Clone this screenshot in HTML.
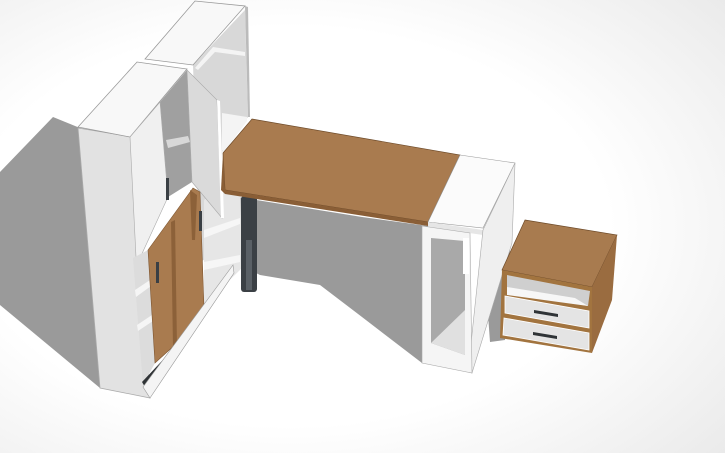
<!DOCTYPE html>
<html><head><meta charset="utf-8"><style>
html,body{margin:0;padding:0;width:725px;height:453px;overflow:hidden;background:#fff}
svg{display:block}
</style></head><body>
<svg width="725" height="453" viewBox="0 0 725 453" xmlns="http://www.w3.org/2000/svg">
<defs>
<radialGradient id="bg" cx="0.4" cy="0.5" r="0.8">
<stop offset="0.55" stop-color="#ffffff"/><stop offset="1" stop-color="#e9e9e9"/>
</radialGradient>
</defs>
<rect width="725" height="453" fill="url(#bg)"/>
<g stroke="none">
<!-- shadows -->
<polygon points="0,172 53,117 80,128 100,388 0,305" fill="#9a9a9a"/>
<polygon points="225,195 362,217 428,226 422,363 362,317 320,285 260,275 240,265" fill="#9a9a9a"/>
<polygon points="482,232 510,250 505,340 490,342" fill="#9a9a9a"/>
<!-- rear shelving interior -->
<polygon points="193,65 245,10 248,117 222,152 222,250 200,262" fill="#d8d8d8"/>
<polygon points="195,68 213,47 245,52 245,56 215,52 198,70" fill="#f4f4f4"/>
<polygon points="222,113 247,117 247,121 224,152 222,150" fill="#f4f4f4"/>
<!-- lower right compartment -->
<polygon points="204,200 240,170 242,268 204,305" fill="#e6e6e6"/>
<polygon points="204,230 240,218 240,224 204,238" fill="#f6f6f6"/>
<polygon points="204,262 240,255 240,262 204,270" fill="#f6f6f6"/>
<!-- left side face -->
<polygon points="78,128 133,137 150,398 100,388" fill="#e2e2e2" stroke="#aaa" stroke-width="0.8"/>
<!-- tops -->
<polygon points="145,59 195,1 245,6 193,65" fill="#f8f8f8" stroke="#999" stroke-width="0.8"/>
<polygon points="78,127 137,62 187,69 130,137" fill="#f8f8f8" stroke="#999" stroke-width="0.8"/>
<polygon points="245,6 248,7 250,117 248,117" fill="#bbb"/>
<!-- inner area between doors -->
<polygon points="160,102 187,70 192,182 168,197" fill="#a0a0a0"/>
<polygon points="166,140 188,136 190,142 168,148" fill="#d8d8d8"/>
<!-- open door -->
<polygon points="187,70 217,100 222,218 192,182" fill="#dadada" stroke="#aaa" stroke-width="0.6"/>
<polygon points="217,100 220,101 224,218 221,218" fill="#fff"/>
<!-- closed upper door -->
<polygon points="130,137 160,102 168,197 140,258 136,257" fill="#f0f0f0" stroke="#aaa" stroke-width="0.6"/>
<rect x="166" y="178" width="3" height="22" fill="#3a3f44"/>
<!-- lower left compartment -->
<polygon points="133,258 148,250 155,363 143,385" fill="#dcdcdc"/>
<polygon points="135,290 150,280 151,286 136,297" fill="#f5f5f5"/>
<polygon points="137,325 152,315 153,321 138,331" fill="#f5f5f5"/>
<!-- brown sliding doors -->
<polygon points="148,250 193,188 200,192 204,308 177,343 155,363" fill="#a97b4f" stroke="#7d5530" stroke-width="0.6"/>
<polygon points="171,222 175,220 177,345 173,348" fill="#8c6139"/>
<polygon points="190,190 197,195 195,240 192,240" fill="#8c6139"/>
<rect x="156" y="262" width="3" height="21" fill="#3a3f44"/>
<rect x="199" y="211" width="3" height="20" fill="#3a3f44"/>
<!-- bottom rail + plinth -->
<polygon points="142,382 176,346 177,350 145,387" fill="#2f3336"/>
<polygon points="143,387 233,265 234,273 150,398" fill="#f4f4f4" stroke="#999" stroke-width="0.6"/>
<!-- pole -->
<rect x="241" y="196" width="16" height="96" rx="3" fill="#3b4045"/>
<rect x="246" y="240" width="6" height="50" fill="#5a6066"/>
<!-- desk top -->
<polygon points="223,153 252,119 460,155 428,222 225,190" fill="#a97b4f" stroke="#6e4b2a" stroke-width="0.7"/>
<polygon points="225,190 428,222 428,226 225,194" fill="#8a5e36"/>
<polygon points="223,153 225,190 225,194 221,190" fill="#8a5e36"/>
<!-- side unit -->
<polygon points="460,155 515,163 483,228 428,222" fill="#fbfbfb" stroke="#999" stroke-width="0.6"/>
<polygon points="428,222 483,230 483,235 428,227" fill="#e6e6e6"/>
<polygon points="483,230 515,163 512,243 472,373 468,372" fill="#efefef" stroke="#aaa" stroke-width="0.6"/>
<polygon points="422,226 470,233 472,373 422,363" fill="#f5f5f5" stroke="#aaa" stroke-width="0.6"/>
<polygon points="431,238 465,241 465,355 431,343" fill="#a9a9a9"/>
<polygon points="431,343 465,310 465,355" fill="#e0e0e0"/>
<rect x="463" y="238" width="6" height="36" fill="#fff"/>
<!-- nightstand -->
<polygon points="525,220 617,235 592,287 502,270" fill="#a87b4f" stroke="#6e4b2a" stroke-width="0.7"/>
<polygon points="617,235 592,287 592,353 612,300" fill="#9a6c40"/>
<polygon points="502,270 592,287 592,353 500,338" fill="#a2743f"/>
<polygon points="507,275 590,291 588,306 507,292" fill="#cfcfcf"/>
<polygon points="507,287 575,298 588,306 507,295" fill="#f7f7f7"/>
<polygon points="505,296 589,311 589,328 505,313" fill="#e4e4e4" stroke="#fff" stroke-width="0.8"/>
<polygon points="504,318 589,333 589,350 503,335" fill="#e4e4e4" stroke="#fff" stroke-width="0.8"/>
<polygon points="534,310 558,314 558,317 534,313" fill="#2f3336"/>
<polygon points="533,332 557,336 557,339 533,335" fill="#2f3336"/>
</g>
</svg>
</body></html>
